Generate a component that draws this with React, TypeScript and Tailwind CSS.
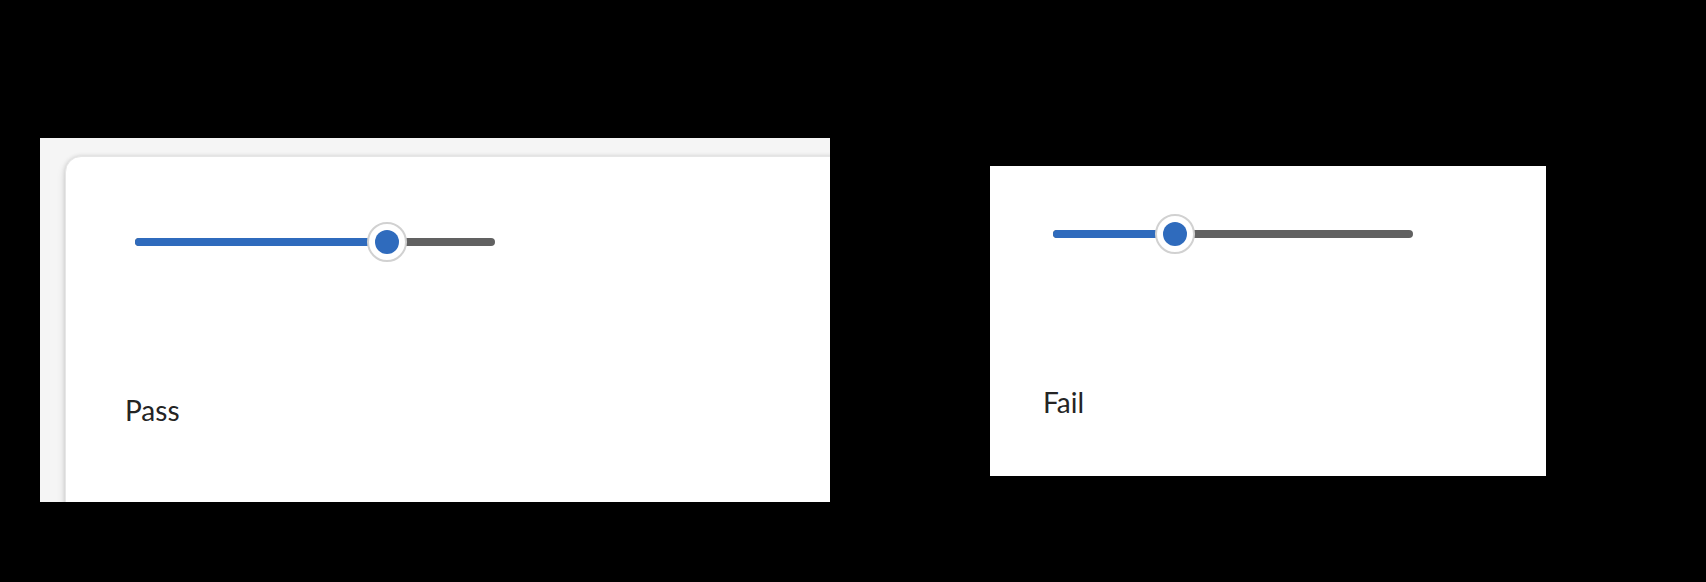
import React from "react";

function Slider({ fill }: { fill: number }) {
  return (
    <div className="relative w-[360px] h-[40px]">
      <div className="absolute left-0 right-0 top-[16px] h-[8px] rounded-full bg-[#616161]" />
      <div
        className="absolute left-0 top-[16px] h-[8px] rounded-full bg-[#2f6bbd]"
        style={{ width: `${fill}px` }}
      />
      <div
        className="absolute top-0 w-[40px] h-[40px] rounded-full bg-white border-2 border-[#d1d1d1] flex items-center justify-center"
        style={{ left: `${fill - 20}px` }}
      >
        <div className="w-[24px] h-[24px] rounded-full bg-[#2f6bbd]" />
      </div>
    </div>
  );
}

export default function App() {
  return (
    <div
      className="w-[1706px] h-[582px] bg-black flex items-start overflow-hidden"
      style={{ fontFamily: "'Segoe UI', Lato, 'Noto Sans', sans-serif" }}
    >
      <div className="mt-[138px] ml-[40px] w-[790px] h-[364px] bg-[#f5f5f5] overflow-hidden pl-[25px] pt-[18px]">
        <div className="w-[800px] h-[400px] bg-white rounded-tl-[16px] border border-[#e6e6e6] shadow-[0_0_4px_rgba(0,0,0,0.12),0_4px_8px_rgba(0,0,0,0.14)] pl-[69px] pt-[65px]">
          <Slider fill={252} />
          <div className="mt-[128px] -ml-[10px] text-[28px] leading-[40px] text-[#242424]">Pass</div>
        </div>
      </div>
      <div className="mt-[166px] ml-[160px] w-[556px] h-[310px] bg-white pl-[63px] pt-[48px]">
        <Slider fill={122} />
        <div className="mt-[128px] -ml-[10px] text-[28px] leading-[40px] text-[#242424]">Fail</div>
      </div>
    </div>
  );
}
